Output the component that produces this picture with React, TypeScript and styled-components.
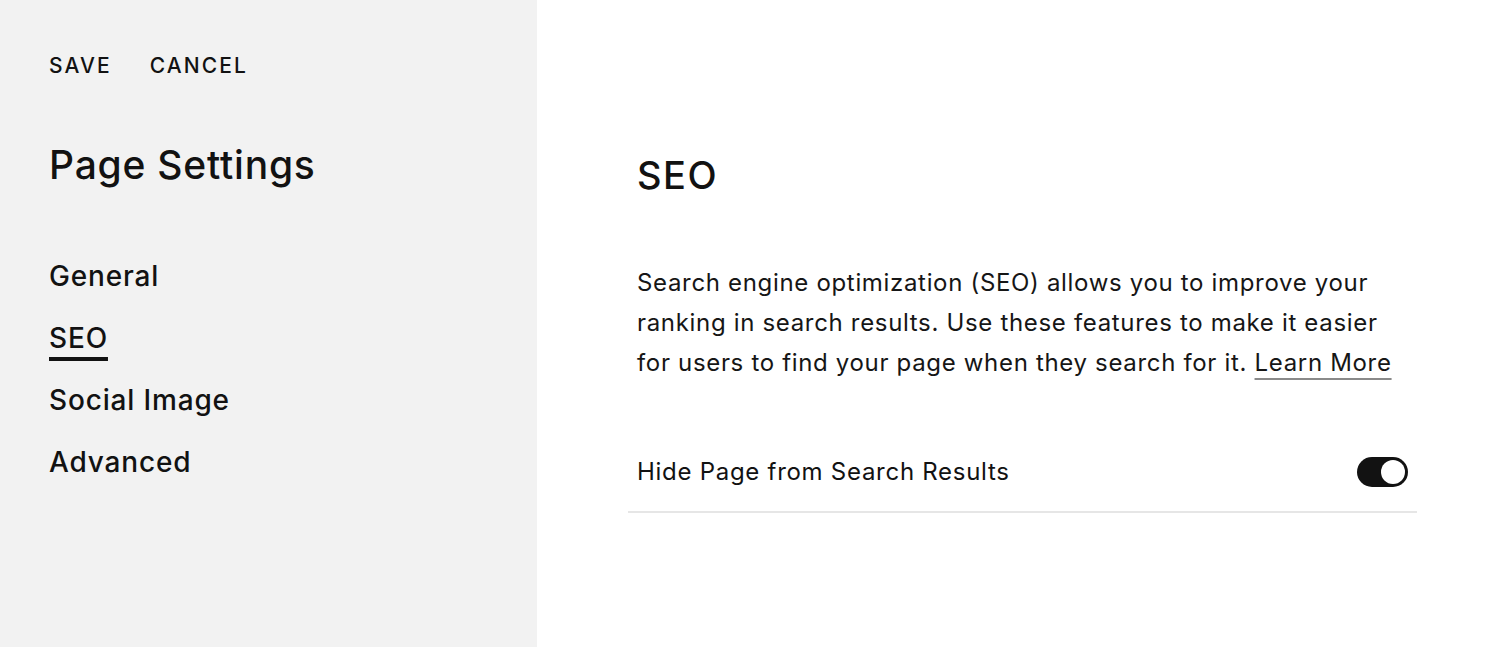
import styled, { createGlobalStyle } from "styled-components";

const GlobalStyle = createGlobalStyle`
  html, body {
    margin: 0;
    padding: 0;
    background: #ffffff;
  }
  body {
    font-family: Inter, "Noto Sans", "Liberation Sans", sans-serif;
    color: #121212;
    -webkit-font-smoothing: antialiased;
  }
`;

const navItems = ["General", "SEO", "Social Image", "Advanced"];

const App = () => {
  return (
    <>
      <GlobalStyle />
      <Layout>
        <Sidebar>
          <Actions>
            <ActionButton>Save</ActionButton>
            <ActionButton>Cancel</ActionButton>
          </Actions>
          <SidebarTitle>Page Settings</SidebarTitle>
          <Nav>
            {navItems.map((item) => (
              <NavItem key={item} $active={item === "SEO"}>
                {item}
              </NavItem>
            ))}
          </Nav>
        </Sidebar>
        <Main>
          <Heading>SEO</Heading>
          <Description>
            Search engine optimization (SEO) allows you to improve your ranking
            in search results. Use these features to make it easier for users
            to find your page when they search for it.{" "}
            <LearnMore href="#">Learn More</LearnMore>
          </Description>
          <SettingRow>
            <SettingLabel>Hide Page from Search Results</SettingLabel>
            <Toggle role="switch" aria-checked="true">
              <Knob />
            </Toggle>
          </SettingRow>
        </Main>
      </Layout>
    </>
  );
};

const Layout = styled.div`
  display: flex;
  height: 647px;
  overflow: hidden;
`;

const Sidebar = styled.aside`
  flex: 0 0 537px;
  box-sizing: border-box;
  padding: 54px 0 0 49px;
  background: #f2f2f2;
  display: flex;
  flex-direction: column;
`;

const Actions = styled.div`
  display: flex;
  gap: 38px;
`;

const ActionButton = styled.button`
  padding: 0;
  border: none;
  background: none;
  font-family: inherit;
  font-size: 21px;
  line-height: 24px;
  font-weight: 500;
  letter-spacing: 0.1em;
  text-transform: uppercase;
  color: #121212;
  cursor: pointer;
`;

const SidebarTitle = styled.h1`
  margin: 63px 0 0;
  font-size: 39px;
  line-height: 48px;
  font-weight: 500;
  letter-spacing: 0.02em;
`;

const Nav = styled.nav`
  display: flex;
  flex-direction: column;
  align-items: flex-start;
  gap: 28px;
  margin-top: 70px;
`;

const NavItem = styled.a<{ $active?: boolean }>`
  font-size: 28px;
  line-height: 34px;
  font-weight: 500;
  letter-spacing: 0.03em;
  color: #121212;
  cursor: pointer;
  text-decoration: ${({ $active }) => ($active ? "underline" : "none")};
  text-decoration-thickness: 4px;
  text-underline-offset: 9px;
`;

const Main = styled.main`
  flex: 1;
  padding: 152px 0 0 91px;
  display: flex;
  flex-direction: column;
  align-items: flex-start;
`;

const Heading = styled.h2`
  margin: 0 0 0 9px;
  font-size: 38px;
  line-height: 46px;
  font-weight: 500;
  letter-spacing: 0.04em;
`;

const Description = styled.p`
  margin: 65px 0 0 9px;
  max-width: 770px;
  font-size: 24px;
  line-height: 40px;
  font-weight: 400;
  letter-spacing: 0.028em;
  color: #161616;
`;

const LearnMore = styled.a`
  white-space: nowrap;
  color: #161616;
  text-decoration: underline;
  text-decoration-color: #8a8a8a;
  text-decoration-thickness: 2px;
  text-underline-offset: 7px;
`;

const SettingRow = styled.div`
  box-sizing: border-box;
  width: 789px;
  margin-top: 50px;
  padding: 19px 9px;
  display: flex;
  align-items: center;
  justify-content: space-between;
  border-bottom: 2px solid #e6e6e6;
`;

const SettingLabel = styled.span`
  font-size: 24px;
  line-height: 40px;
  letter-spacing: 0.03em;
`;

const Toggle = styled.div`
  box-sizing: border-box;
  width: 51px;
  height: 30px;
  padding: 3px;
  border-radius: 15px;
  background: #121212;
  display: flex;
  justify-content: flex-end;
  cursor: pointer;
`;

const Knob = styled.span`
  width: 24px;
  height: 24px;
  border-radius: 50%;
  background: #ffffff;
`;

export default App;
